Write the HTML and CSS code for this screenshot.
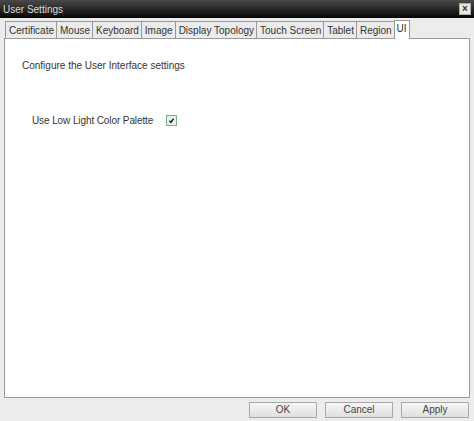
FILE: index.html
```html
<!DOCTYPE html>
<html>
<head>
<meta charset="utf-8">
<link rel="stylesheet" href="styles.css">
</head>
<body>
<div class="window">
  <div class="titlebar">
    <span class="title">User Settings</span>
    <span class="close">×</span>
  </div>
  <div class="tabs">
    <div class="tab">Certificate</div>
    <div class="tab">Mouse</div>
    <div class="tab">Keyboard</div>
    <div class="tab">Image</div>
    <div class="tab">Display Topology</div>
    <div class="tab">Touch Screen</div>
    <div class="tab">Tablet</div>
    <div class="tab">Region</div>
    <div class="tab active">UI</div>
  </div>
  <div class="panel">
    <p class="intro">Configure the User Interface settings</p>
    <label class="option">
      <span class="label">Use Low Light Color Palette</span>
      <span class="check"><svg viewBox="0 0 7 7" width="7" height="7"><path d="M1.4 3.8 L3 5.3 L5.6 1.6" fill="none" stroke="#222" stroke-width="1.5"/></svg></span>
    </label>
  </div>
  <div class="footer">
    <button class="btn">OK</button>
    <button class="btn">Cancel</button>
    <button class="btn">Apply</button>
  </div>
</div>
</body>
</html>
```
FILE: styles.css
```css
* { box-sizing: border-box; }
html, body { margin: 0; padding: 0; }
body {
  width: 474px;
  height: 421px;
  background: #ececec;
  font-family: "Liberation Sans", Arial, sans-serif;
  font-size: 10px;
  color: #333;
  overflow: hidden;
}
.window {
  display: flex;
  flex-direction: column;
  height: 421px;
}
.titlebar {
  height: 18px;
  background: linear-gradient(#4a4a4a, #050505);
  display: flex;
  align-items: center;
  justify-content: space-between;
  padding: 0 3px 0 3px;
}
.title {
  color: #dcdcdc;
  font-size: 10px;
}
.close {
  width: 12px;
  height: 12px;
  background: #e6e6e6;
  border: 1px solid #aaa;
  color: #333;
  font-size: 10px;
  line-height: 10px;
  text-align: center;
  font-weight: bold;
}
.tabs {
  display: flex;
  align-items: flex-end;
  padding: 3px 0 0 5px;
  height: 20px;
  background: #ececec;
}
.tab {
  height: 17px;
  padding: 0 2px 0 3px;
  line-height: 17px;
  background: #ebebeb;
  border: 1px solid #9a9a9a;
  border-bottom: none;
  border-right: none;
  color: #333;
  font-size: 10px;
}
.tab.active {
  height: 19px;
  background: #fff;
  border-right: 1px solid #9a9a9a;
  padding: 0 2px 0 2px;
  line-height: 16px;
  margin-bottom: -1px;
  position: relative;
}
.panel {
  margin: 0 4px;
  height: 360px;
  background: #fff;
  border: 1px solid #9a9a9a;
  padding: 21px 0 0 17px;
}
.intro {
  margin: 0;
  font-size: 10px;
  line-height: 12px;
}
.option {
  display: flex;
  align-items: center;
  margin-top: 43px;
  padding-left: 10px;
}
.label {
  font-size: 10px;
  letter-spacing: -0.1px;
}
.check {
  margin-left: 13px;
  width: 11px;
  height: 11px;
  border: 1px solid #7aae86;
  background: #e8f3e8;
  display: flex;
  align-items: center;
  justify-content: center;
}
.footer {
  flex: 1;
  display: flex;
  justify-content: flex-end;
  align-items: center;
  gap: 8px;
  padding-right: 5px;
}
.btn {
  width: 68px;
  height: 16px;
  padding: 0;
  border: 1px solid #a8a8a8;
  background: linear-gradient(#f6f6f6, #e0e0e0);
  font-family: "Liberation Sans", Arial, sans-serif;
  font-size: 10px;
  color: #444;
  line-height: 14px;
}
```
